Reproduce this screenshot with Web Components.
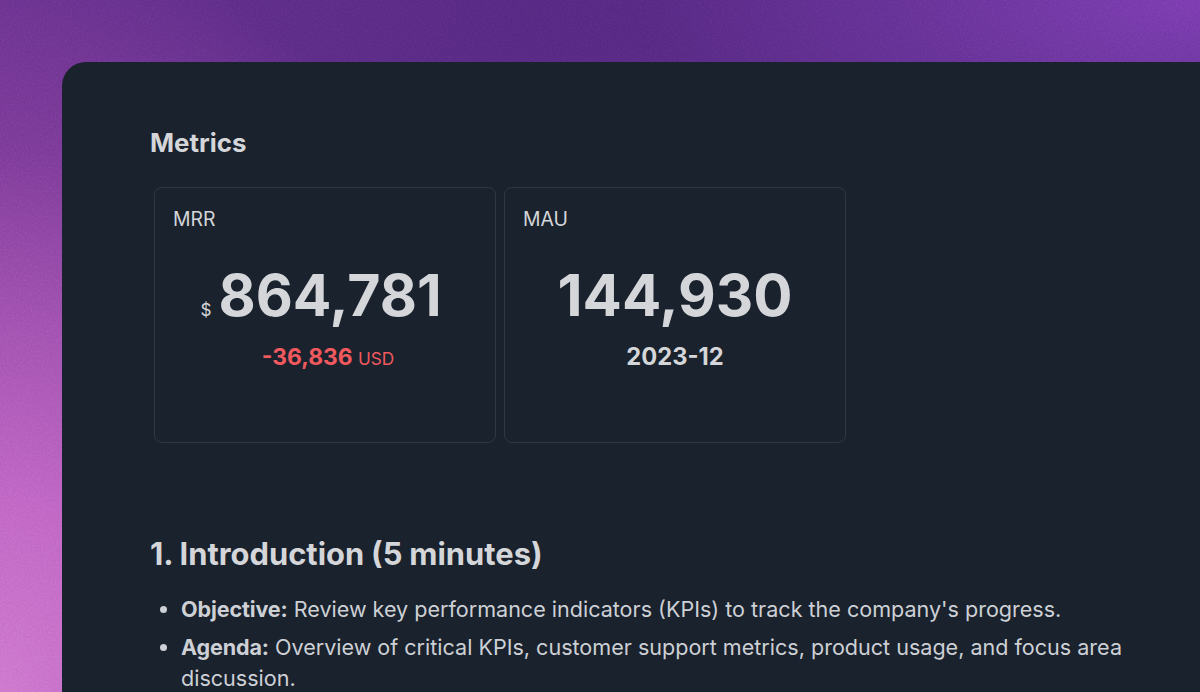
<!DOCTYPE html>
<html lang="en"><head><meta charset="utf-8"><title>Metrics</title>
<style>
html,body{margin:0;height:100%;overflow:hidden}
body{font-family:Inter,"Liberation Sans",sans-serif;color:#d4d6d9;font-optical-sizing:none}
</style></head><body>
<template id="t-stage"><style>
:host{display:block;position:relative;width:1200px;height:692px;overflow:hidden;box-sizing:border-box;padding:62px 0 0 62px;
background:
 radial-gradient(ellipse 560px 760px at 0% 100%,#cc74cc 0%,#bd62c2 26%,#9c4eac 50%,rgba(122,58,150,.9) 72%,rgba(100,48,140,0) 100%),
 radial-gradient(ellipse 560px 220px at 100% 0%,#783bae 0%,rgba(105,52,156,.65) 55%,rgba(85,42,130,0) 100%),
 linear-gradient(100deg,#612e88 0%,#54287e 40%,#55297f 100%)}
.noise{position:absolute;inset:0;width:100%;height:100%;opacity:.28;mix-blend-mode:overlay;pointer-events:none}
.panel{position:relative;box-sizing:border-box;height:100%;background:#1a222d;border-top-left-radius:24px;padding:63px 0 0 88px}
</style>
<svg class="noise" aria-hidden="true"><filter id="n"><feTurbulence type="fractalNoise" baseFrequency=".55" numOctaves="2" seed="4"/><feColorMatrix type="saturate" values="0"/></filter><rect width="100%" height="100%" filter="url(#n)"/></svg>
<div class="panel"><slot></slot></div></template>

<template id="t-heading"><style>
:host{display:block;font-weight:700;color:#d4d6d9}
</style><slot></slot></template>

<template id="t-card"><style>
:host{display:flex;flex-direction:column;box-sizing:border-box;width:342px;height:256px;border:1px solid #303743;border-radius:8px;padding:17px 18px 0;color:#d4d6d9}
.label{font-size:19.4px;line-height:28px}
.main{margin-top:34px;display:flex;flex-direction:column;align-items:center}
.value{font-size:58.2px;font-weight:700;line-height:57px;display:flex;align-items:baseline;gap:7px}
.value ::slotted([slot=unit]){font-size:17.2px;font-weight:400;line-height:20px}
.sub{margin-top:18px;font-size:23.7px;line-height:30px;font-weight:700}
</style><div class="label"><slot name="label"></slot></div>
<div class="main"><div class="value"><slot name="unit"></slot><slot name="value"></slot></div><div class="sub"><slot name="sub"></slot></div></div></template>

<template id="t-bullets"><style>
:host{display:block;margin:0;font-size:21.55px;line-height:31px;color:#cdd0d5}
ul{margin:0;padding:0 0 0 31px}
::slotted(li){margin-bottom:7px}
</style><ul><slot></slot></ul></template>

<script>
function def(name,id){customElements.define(name,class extends HTMLElement{constructor(){super();this.attachShadow({mode:'open'}).appendChild(document.getElementById(id).content.cloneNode(true))}})}
def('x-stage','t-stage');def('x-heading','t-heading');def('x-card','t-card');def('x-bullets','t-bullets');
customElements.define('x-cards',class extends HTMLElement{constructor(){super();this.attachShadow({mode:'open'}).innerHTML='<style>:host{display:flex;gap:8px;margin:26px 0 0 4px}</style><slot></slot>'}});
</script>

<x-stage>
<x-heading style="font-size:25.86px;line-height:36px">Metrics</x-heading>
<x-cards>
 <x-card><span slot="label">MRR</span><span slot="unit">$</span><span slot="value" style="font-size:57.2px;margin-right:8px">864,781</span><span slot="sub" style="color:#f0595d;font-size:22.8px;margin-left:6px">-36,836 <span style="font-size:17.2px;font-weight:400">USD</span></span></x-card>
 <x-card><span slot="label">MAU</span><span slot="value">144,930</span><span slot="sub">2023-12</span></x-card>
</x-cards>
<x-heading style="font-size:30.9px;line-height:40px;margin-top:91px;word-spacing:-.5px">1. Introduction (5 minutes)</x-heading>
<x-bullets style="margin-top:20px">
 <li><b style="font-weight:700;letter-spacing:-.12px">Objective:</b> Review key performance indicators (KPIs) to track the company's progress.</li>
 <li><b style="font-weight:700;letter-spacing:-.12px">Agenda:</b> Overview of critical KPIs, customer support metrics, product usage, and focus area discussion.</li>
</x-bullets>
</x-stage>
</body></html>
